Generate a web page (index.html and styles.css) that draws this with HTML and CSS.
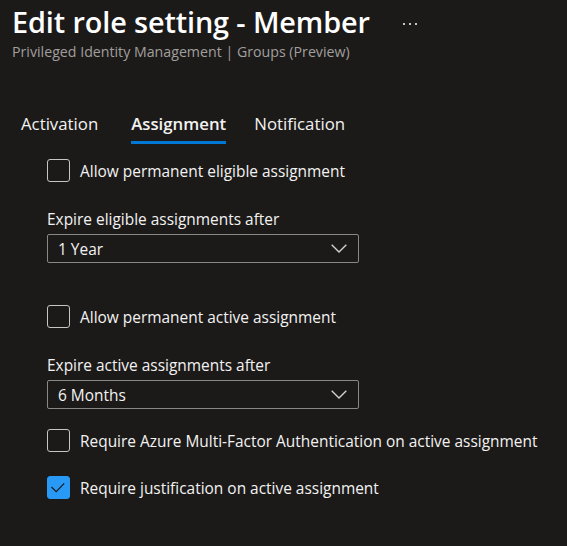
FILE: index.html
```html
<!DOCTYPE html>
<html lang="en">
<head>
<meta charset="utf-8">
<title>Edit role setting - Member</title>
<link rel="stylesheet" href="styles.css">
</head>
<body>
<div class="page">
  <header class="head">
    <div class="title-row">
      <h1 class="title">Edit role setting - Member</h1>
      <span class="more" aria-label="More"><i></i><i></i><i></i></span>
    </div>
    <div class="subtitle">Privileged Identity Management | Groups (Preview)</div>
  </header>

  <nav class="tabs">
    <span class="tab">Activation</span>
    <span class="tab active">Assignment</span>
    <span class="tab">Notification</span>
  </nav>

  <div class="form">
    <label class="check">
      <span class="box"></span>
      <span class="check-text">Allow permanent eligible assignment</span>
    </label>

    <div class="field">
      <div class="field-label">Expire eligible assignments after</div>
      <div class="select">
        <span>1 Year</span>
        <svg class="chev" width="16" height="9" viewBox="0 0 16 9"><path d="M0.7 0.7 L8 8 L15.3 0.7" fill="none" stroke="#d2d0ce" stroke-width="1.4"/></svg>
      </div>
    </div>

    <label class="check gap-lg">
      <span class="box"></span>
      <span class="check-text">Allow permanent active assignment</span>
    </label>

    <div class="field">
      <div class="field-label">Expire active assignments after</div>
      <div class="select">
        <span>6 Months</span>
        <svg class="chev" width="16" height="9" viewBox="0 0 16 9"><path d="M0.7 0.7 L8 8 L15.3 0.7" fill="none" stroke="#d2d0ce" stroke-width="1.4"/></svg>
      </div>
    </div>

    <label class="check gap-sm">
      <span class="box"></span>
      <span class="check-text">Require Azure Multi-Factor Authentication on active assignment</span>
    </label>

    <label class="check gap-md">
      <span class="box checked">
        <svg width="23" height="23" viewBox="0 0 23 23"><path d="M4.5 11 L9.2 15.6 L17.2 7.4" fill="none" stroke="#1b1a19" stroke-width="1.2"/></svg>
      </span>
      <span class="check-text">Require justification on active assignment</span>
    </label>
  </div>
</div>
</body>
</html>
```

FILE: styles.css
```css
html, body {
  margin: 0;
  padding: 0;
  background: #1b1a19;
}

body {
  font-family: "Open Sans", "Noto Sans", sans-serif;
  color: #f3f2f1;
  width: 567px;
  height: 546px;
  overflow: hidden;
}

.page {
  padding: 4px 0 0 12px;
}

.title-row {
  display: flex;
  align-items: center;
  height: 36px;
}

.title {
  margin: 0;
  font-size: 28.8px;
  font-weight: 600;
  line-height: 36px;
  color: #ffffff;
  letter-spacing: -0.1px;
}

.more {
  display: flex;
  gap: 4px;
  margin-left: 33px;
  margin-top: 4px;
}

.more i {
  display: block;
  width: 2px;
  height: 2px;
  background: #c8c6c4;
}

.subtitle {
  margin-top: 2px;
  font-size: 14.2px;
  line-height: 20px;
  color: #a19f9d;
}

.tabs {
  display: flex;
  margin-top: 50px;
  padding-left: 9px;
}

.tab {
  font-size: 16.8px;
  line-height: 24px;
  padding-bottom: 5px;
  border-bottom: 3px solid transparent;
  margin-right: 32px;
  color: #f3f2f1;
}

.tab.active {
  font-weight: 600;
  border-bottom-color: #0078d4;
  margin-right: 28px;
  margin-left: 1px;
}

.form {
  padding-left: 35px;
  padding-top: 15px;
  display: flex;
  flex-direction: column;
}

.check {
  display: flex;
  align-items: center;
  height: 23px;
  font-size: 15.45px;
}

.box {
  width: 23px;
  height: 23px;
  box-sizing: border-box;
  border: 1.2px solid #c8c6c4;
  border-radius: 3px;
  flex: none;
  display: block;
}

.box.checked {
  background: #2899f5;
  border-color: #2899f5;
}

.box.checked svg {
  display: block;
  margin: -1.2px;
}

.check-text {
  margin-left: 10px;
  line-height: 20px;
}

.field {
  margin-top: 27px;
  width: 312px;
}

.field-label {
  font-size: 15.45px;
  line-height: 20px;
  margin-bottom: 5px;
}

.select {
  display: flex;
  align-items: center;
  justify-content: space-between;
  height: 29px;
  box-sizing: border-box;
  border: 1px solid #8a8886;
  border-radius: 2px;
  padding: 0 11px 0 10px;
  font-size: 15.45px;
}

.gap-lg { margin-top: 42px; }
.gap-sm { margin-top: 20px; }
.gap-md { margin-top: 24px; }
```
